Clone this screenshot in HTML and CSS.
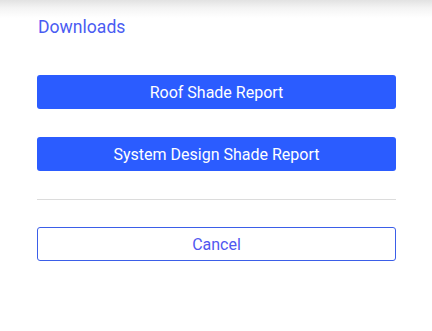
FILE: index.html
```html
<!DOCTYPE html>
<html lang="en">
<head>
    <meta charset="UTF-8">
    <meta name="viewport" content="width=device-width, initial-scale=1.0">
    <title>Downloads</title>
    <link rel="stylesheet" href="styles.css">
</head>
<body>
    <div class="dialog">
        <h2 class="titulo">Downloads</h2>

        <div class="botoes">
            <button class="btn cheio">Roof Shade Report</button>
            <button class="btn cheio">System Design Shade Report</button>
        </div>

        <hr class="linha">

        <button class="btn vazio">Cancel</button>
    </div>
</body>
</html>
```

FILE: styles.css
```css
body {
    margin: 0;
    font-family: Roboto, "Liberation Sans", sans-serif;
    background-color: #fff;
}

.dialog {
    height: 331px;
    box-sizing: border-box;
    padding: 15px 36px 0 37px;
    background: linear-gradient(to bottom, #e2e2e2 0px, #f4f4f4 8px, #fff 18px);
}

.titulo {
    margin: 0 0 0 1px;
    font-size: 17.6px;
    font-weight: 400;
    line-height: 24px;
    color: #4a5cf2;
}

.botoes {
    display: flex;
    flex-direction: column;
    gap: 28px;
    margin-top: 36px;
}

.btn {
    display: block;
    width: 100%;
    height: 34px;
    border-radius: 3px;
    font-family: Roboto, "Liberation Sans", sans-serif;
    font-size: 16px;
    cursor: pointer;
}

.cheio {
    background-color: #2b5cff;
    border: none;
    color: #fff;
}

.vazio {
    background-color: #fff;
    border: 1px solid #3b5ee8;
    color: #5058f0;
}

.linha {
    border: none;
    border-top: 1px solid #dcdcdc;
    margin: 28px 0 27px 0;
}
```
